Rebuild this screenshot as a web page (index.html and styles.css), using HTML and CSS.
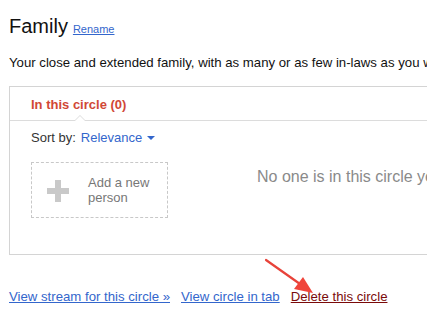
FILE: index.html
```html
<!DOCTYPE html>
<html>
<head>
<meta charset="utf-8">
<link rel="stylesheet" href="styles.css">
</head>
<body>
<div class="page">
  <div class="title-row">
    <h1 class="title">Family</h1>
    <a class="rename" href="#">Rename</a>
  </div>
  <p class="desc">Your close and extended family, with as many or as few in-laws as you want.</p>
  <div class="panel">
    <div class="tabs">
      <span class="tab-active">In this circle (0)</span>
      <span class="notch"></span>
    </div>
    <div class="panel-body">
      <div class="sort">Sort by: <a class="sort-link" href="#">Relevance</a><span class="caret"></span></div>
      <div class="content">
        <div class="add-card">
          <span class="plus"><span class="plus-h"></span><span class="plus-v"></span></span>
          <span class="add-text">Add a new<br>person</span>
        </div>
        <div class="empty">No one is in this circle yet.</div>
      </div>
    </div>
  </div>
  <div class="footer">
    <a class="link" href="#">View stream for this circle »</a>
    <a class="link" href="#">View circle in tab</a>
    <a class="link delete" href="#">Delete this circle</a>
  </div>
</div>
<svg class="arrow" width="427" height="315" viewBox="0 0 427 315">
  <line x1="266" y1="260" x2="300" y2="284" stroke="#e8433a" stroke-width="2.2" stroke-linecap="round"/>
  <polygon points="313,293 294,289 303,277" fill="#f0453b"/>
</svg>
</body>
</html>
```
FILE: styles.css
```css
html, body {
  margin: 0;
  padding: 0;
  background: #fff;
  overflow: hidden;
  width: 427px;
  height: 315px;
}
body {
  font-family: Arial, "Liberation Sans", sans-serif;
  color: #222;
  position: relative;
}
.page {
  padding: 14px 0 0 9px;
  width: 600px;
}
.title-row {
  display: flex;
  align-items: baseline;
  gap: 5px;
  height: 24px;
}
.title {
  margin: 0;
  font-size: 20px;
  font-weight: normal;
  color: #111;
  line-height: 24px;
}
.rename {
  font-size: 11px;
  color: #3366cc;
}
.desc {
  margin: 17px 0 0 0;
  font-size: 13.2px;
  line-height: 16px;
  color: #111;
  white-space: nowrap;
}
.panel {
  margin-top: 15px;
  border: 1px solid #d4d4d4;
  width: 560px;
  height: 167px;
}
.tabs {
  position: relative;
  height: 33px;
  border-bottom: 1px solid #dcdcdc;
  padding-left: 21px;
  display: flex;
  align-items: center;
}
.tab-active {
  color: #d14836;
  font-weight: bold;
  font-size: 13px;
  padding-top: 1px;
}
.notch {
  position: absolute;
  left: 64px;
  bottom: -1px;
  width: 0;
  height: 0;
  border-left: 6px solid transparent;
  border-right: 6px solid transparent;
  border-bottom: 6px solid #dcdcdc;
}
.notch::after {
  content: "";
  position: absolute;
  left: -5px;
  top: 1px;
  border-left: 5px solid transparent;
  border-right: 5px solid transparent;
  border-bottom: 5px solid #fff;
}
.panel-body {
  padding: 8px 0 0 21px;
}
.sort {
  font-size: 13px;
  color: #333;
  display: flex;
  align-items: center;
  height: 16px;
}
.sort-link {
  color: #3366cc;
  text-decoration: none;
  margin-left: 5px;
}
.caret {
  margin-left: 5px;
  margin-top: 2px;
  width: 0;
  height: 0;
  border-left: 4px solid transparent;
  border-right: 4px solid transparent;
  border-top: 4px solid #3366cc;
}
.content {
  display: flex;
  margin-top: 17px;
}
.add-card {
  width: 135px;
  height: 54px;
  border: 1px dashed #c8c8c8;
  display: flex;
  align-items: center;
}
.plus {
  position: relative;
  width: 22px;
  height: 22px;
  margin-left: 15px;
  margin-top: 2px;
}
.plus-h {
  position: absolute;
  left: 0;
  top: 8px;
  width: 22px;
  height: 6px;
  background: #c9c9c9;
}
.plus-v {
  position: absolute;
  left: 8px;
  top: 0;
  width: 6px;
  height: 22px;
  background: #c9c9c9;
}
.add-text {
  margin-left: 19px;
  font-size: 13px;
  line-height: 15px;
  color: #777;
}
.empty {
  margin-left: 89px;
  margin-top: 6px;
  font-size: 16px;
  color: #8a8a8a;
  white-space: nowrap;
}
.footer {
  margin-top: 34px;
  display: flex;
  gap: 11px;
  font-size: 13.2px;
}
.link {
  color: #3366cc;
}
.delete {
  color: #7a0a0a;
}
.arrow {
  position: absolute;
  left: 0;
  top: 0;
  pointer-events: none;
}
```
